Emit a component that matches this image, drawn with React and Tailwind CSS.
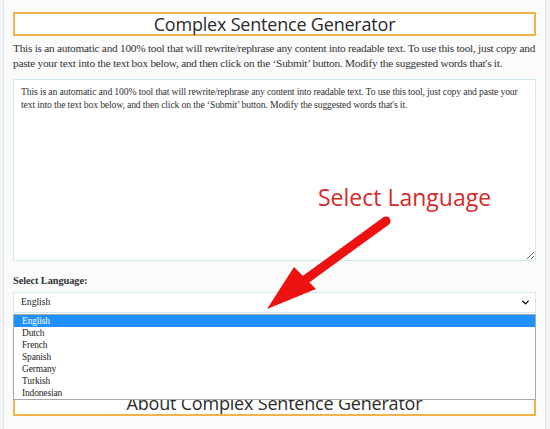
import { ChevronDown } from "lucide-react";

const languages = ["English", "Dutch", "French", "Spanish", "Germany", "Turkish", "Indonesian"];

const intro =
  "This is an automatic and 100% tool that will rewrite/rephrase any content into readable text. To use this tool, just copy and paste your text into the text box below, and then click on the \u2018Submit\u2019 button. Modify the suggested words that's it.";

export default function App() {
  return (
    <div className="relative h-[429px] w-[550px] overflow-hidden bg-[#f3f4f5]">
      <div className="ml-[3px] h-full w-[543px] border-x border-[#e3e5e7] bg-[#fbfbfb] px-[9px] pt-[12px]">
        {/* Title */}
        <div className="flex h-[24px] items-center justify-center border-2 border-[#efb54a] bg-white font-['Open_Sans',sans-serif] text-[18px] tracking-[-0.2px] text-[#2b2b2b]">
          Complex Sentence Generator
        </div>

        <p className="mt-[5px] font-['Liberation_Serif',serif] text-[11.3px] leading-[14.5px] tracking-[-0.25px] text-[#333]">
          {intro}
        </p>

        <textarea
          defaultValue={intro}
          className="mt-[9px] block h-[182px] w-full resize-y border border-[#cdeaf3] bg-white px-[7px] py-[5px] font-['Liberation_Serif',serif] text-[9.7px] leading-[13px] tracking-[-0.15px] text-[#333] outline-none"
        />

        <div className="mt-[12px] font-['Liberation_Serif',serif] text-[10.4px] font-bold tracking-[-0.1px] text-[#333]">
          Select Language:
        </div>

        <div className="relative mt-[3px]">
          <div className="flex h-[21px] items-center justify-between border border-[#d3e8f0] bg-white pl-[7px] pr-[4px] font-['Liberation_Serif',serif] text-[9.6px] text-[#222]">
            <span>English</span>
            <ChevronDown className="h-[11px] w-[11px] text-black" strokeWidth={3} />
          </div>

          {/* Open dropdown list */}
          <ul className="absolute left-0 right-0 top-[22px] z-10 border border-[#a8a8a8] bg-white font-['Liberation_Serif',serif] text-[9.4px] leading-[12px] tracking-[-0.1px] text-[#222]">
            {languages.map((lang, i) => (
              <li
                key={lang}
                className={i === 0 ? "bg-[#1e90ff] pl-[8px] text-white" : "pl-[8px]"}
              >
                {lang}
              </li>
            ))}
          </ul>
        </div>

        <div className="mt-[79px] flex h-[24px] items-center justify-center border-2 border-[#efb54a] bg-white font-['Open_Sans',sans-serif] text-[18px] tracking-[-0.2px] text-[#2b2b2b]">
          About Complex Sentence Generator
        </div>
      </div>

      {/* Annotation */}
      <div className="absolute left-[318px] top-[180px] font-['Open_Sans',sans-serif] text-[23px] text-[#d42a2a]">
        Select Language
      </div>
      <svg className="absolute left-0 top-0" width="550" height="429" viewBox="0 0 550 429">
        <line x1="386" y1="221" x2="298" y2="285" stroke="#ee1111" strokeWidth="9" strokeLinecap="round" />
        <polygon points="267,309 294,267 316,289" fill="#ee1111" />
      </svg>
    </div>
  );
}
